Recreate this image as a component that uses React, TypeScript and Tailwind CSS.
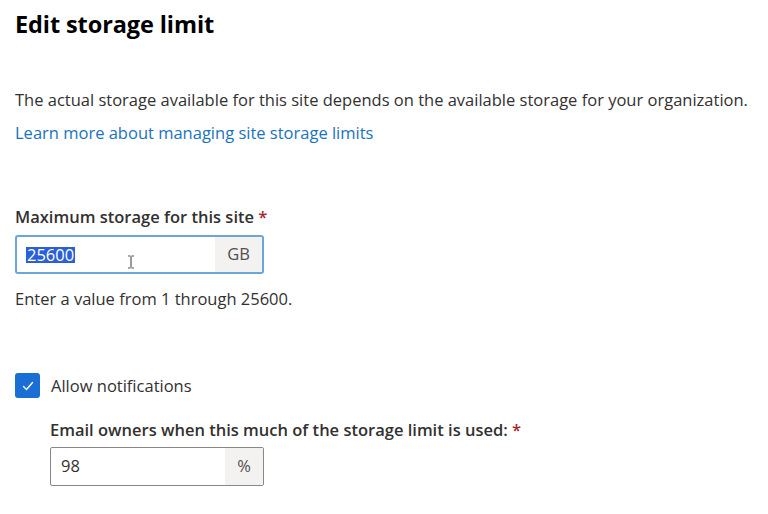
import React from "react";

export default function App() {
  return (
    <div
      className="w-[768px] h-[514px] bg-white text-[#323130] pl-[15px] pt-[9px] overflow-hidden"
      style={{ fontFamily: '"Open Sans", "Noto Sans", sans-serif' }}
    >
      {/* Header */}
      <h1 className="text-[23.5px] leading-[30px] font-bold text-black tracking-[-0.1px]">
        Edit storage limit
      </h1>

      {/* Description */}
      <p className="mt-[50px] text-[16.5px] leading-[22px]">
        The actual storage available for this site depends on the available storage for your organization.
      </p>
      <a href="#" className="block mt-[11px] text-[16.5px] leading-[22px] text-[#1a73c0]">
        Learn more about managing site storage limits
      </a>

      {/* Maximum storage */}
      <div className="mt-[62px] text-[16.5px] leading-[22px] font-semibold">
        Maximum storage for this site <span className="text-[#a4262c]">*</span>
      </div>
      <div className="relative mt-[7px] flex w-[249px] h-[39px] border-2 border-[#6aa5dc] rounded-[3px] overflow-hidden">
        <div className="flex-1 flex items-center pl-[9px]">
          <span className="bg-[#2a5fd6] text-white text-[16.5px] leading-[16px] px-[1px]">25600</span>
        </div>
        <div className="w-[47px] flex items-center justify-center bg-[#f3f2f1] text-[16.5px] text-[#505050]">
          GB
        </div>
        {/* mouse text cursor */}
        <svg className="absolute left-[110px] top-[18px]" width="8" height="14" viewBox="0 0 8 14">
          <path
            d="M1 1h2.5M4.5 1H7M4 1.5v11M1 13h2.5M4.5 13H7"
            stroke="#555"
            strokeWidth="1.2"
            fill="none"
          />
        </svg>
      </div>
      <p className="mt-[14px] text-[16.5px] leading-[22px]">Enter a value from 1 through 25600.</p>

      {/* Notifications */}
      <label className="mt-[63px] flex items-center gap-[11px]">
        <span className="w-[25px] h-[25px] rounded-[3px] bg-[#1a6fd4] flex items-center justify-center">
          <svg width="14" height="14" viewBox="0 0 14 14" fill="none">
            <path
              d="M2.5 7.5l3 3 6-7"
              stroke="white"
              strokeWidth="1.4"
              strokeLinecap="round"
              strokeLinejoin="round"
            />
          </svg>
        </span>
        <span className="text-[16.5px] leading-[22px]">Allow notifications</span>
      </label>

      <div className="ml-[35px]">
        <div className="mt-[21px] text-[16.5px] leading-[22px] font-semibold">
          Email owners when this much of the storage limit is used:{" "}
          <span className="text-[#a4262c]">*</span>
        </div>
        <div className="mt-[6px] flex w-[214px] h-[39px] border border-[#8a8886] rounded-[2px] overflow-hidden">
          <div className="flex-1 flex items-center pl-[10px] text-[16.5px]">98</div>
          <div className="w-[38px] flex items-center justify-center bg-[#f3f2f1] text-[16.5px] text-[#505050]">
            %
          </div>
        </div>
      </div>
    </div>
  );
}
